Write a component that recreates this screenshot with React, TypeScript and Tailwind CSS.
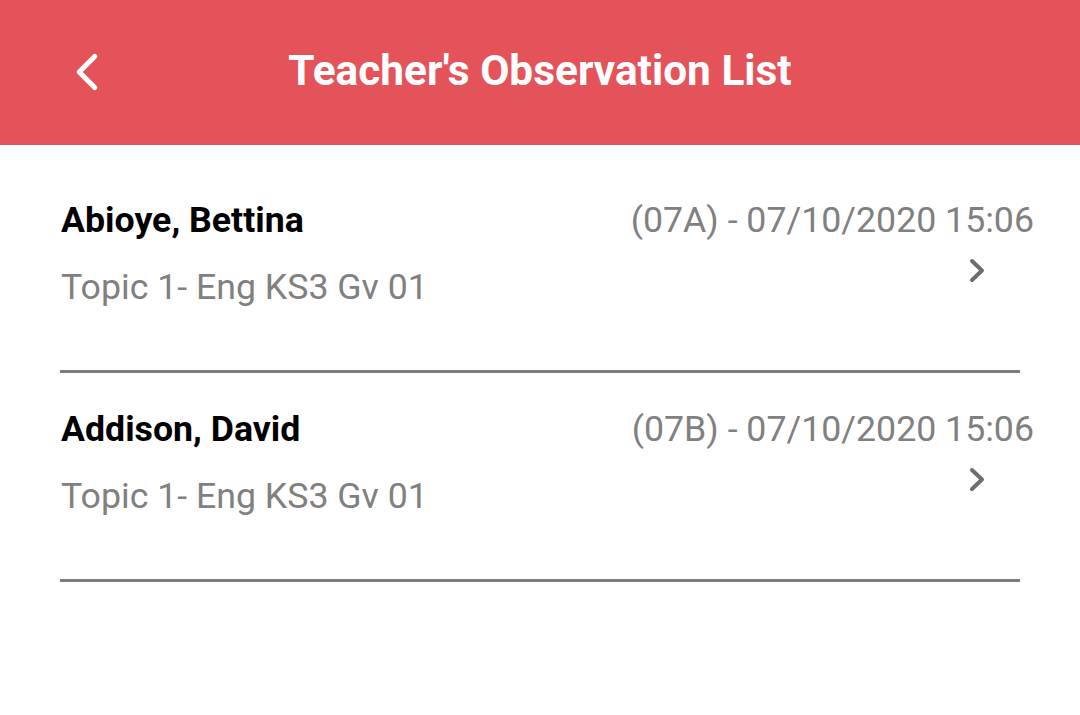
import { ChevronLeft } from "lucide-react";

type Observation = {
  name: string;
  group: string;
  date: string;
  topic: string;
};

const observations: Observation[] = [
  { name: "Abioye, Bettina", group: "07A", date: "07/10/2020 15:06", topic: "Topic 1- Eng KS3 Gv 01" },
  { name: "Addison, David", group: "07B", date: "07/10/2020 15:06", topic: "Topic 1- Eng KS3 Gv 01" },
];

function RowChevron() {
  return (
    <svg width="17" height="25" viewBox="0 0 17 25" fill="none" className="block">
      <path d="M3 3 L13 12.5 L3 22" stroke="#6e6e6e" strokeWidth="4" strokeLinecap="round" strokeLinejoin="round" />
    </svg>
  );
}

export default function App() {
  return (
    <div
      className="w-[1080px] h-[715px] bg-white overflow-hidden"
      style={{ fontFamily: "Roboto, 'Noto Sans', sans-serif" }}
    >
      <header className="relative h-[145px] bg-[#e5535a] flex items-center justify-center">
        <button className="absolute left-[56px] top-[41px] text-white">
          <ChevronLeft size={62} strokeWidth={2} />
        </button>
        <h1 className="text-white text-[42.4px] font-bold leading-none -mt-[2px]">
          Teacher's Observation List
        </h1>
      </header>

      <ul className="pt-[19px]">
        {observations.map((o) => (
          <li key={o.name}>
            <div className="flex justify-between pl-[61px] pr-[46px] pt-[35px] pb-[62px]">
              <div className="flex flex-col gap-[25px]">
                <div className="text-[35.7px] leading-[42px] font-bold text-black">{o.name}</div>
                <div className="text-[35.7px] leading-[42px] text-[#808080]">{o.topic}</div>
              </div>
              <div className="flex flex-col items-end">
                <div className="text-[35.7px] leading-[42px] text-[#808080]">
                  ({o.group}) - {o.date}
                </div>
                <div className="mt-[17px] mr-[48px]">
                  <RowChevron />
                </div>
              </div>
            </div>
            <div className="mx-[60px] h-[3px] bg-[#7d7d7d]" />
          </li>
        ))}
      </ul>
    </div>
  );
}
